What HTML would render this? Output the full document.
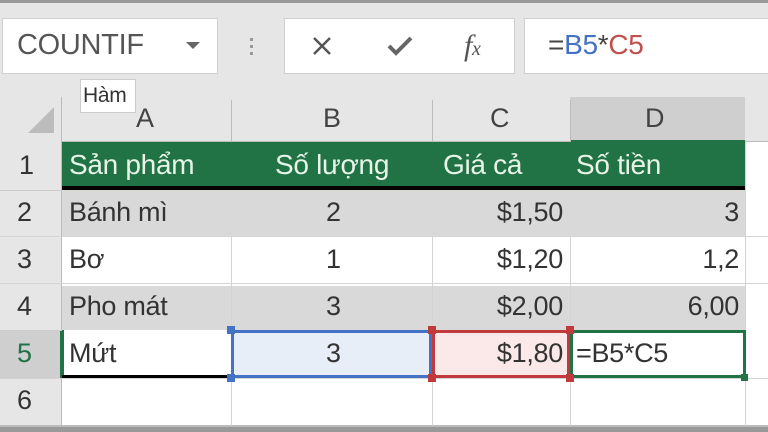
<!DOCTYPE html>
<html><head><meta charset="utf-8"><style>
*{margin:0;padding:0;box-sizing:border-box}
body{width:768px;height:432px;overflow:hidden;background:#e6e6e6;font-family:"Liberation Sans",sans-serif;position:relative;color:#333}
.a{position:absolute}
.box{background:#fff;border:1px solid #d0d0d0}
.t{position:absolute;font-size:27px;line-height:1;white-space:nowrap;letter-spacing:-0.3px}
.hl{position:absolute;background:#cfcfcf}
</style></head><body>
<div class="a" style="left:0;top:0;width:768px;height:3px;background:#999"></div>
<div class="a box" style="left:2px;top:18px;width:216px;height:56px"></div>
<div class="t" style="left:17px;top:31px;color:#555;font-size:29px">COUNTIF</div>
<div class="a" style="left:186px;top:42px;width:0;height:0;border-left:7px solid transparent;border-right:7px solid transparent;border-top:7px solid #666"></div>
<div class="a" style="left:250px;top:38px;width:3px;height:3px;background:#999;box-shadow:0 7px 0 #999,0 14px 0 #999"></div>
<div class="a box" style="left:284px;top:18px;width:231px;height:56px"></div>
<svg class="a" style="left:310px;top:34px" width="24" height="24"><path d="M4 4L20 20M20 4L4 20" stroke="#555" stroke-width="2.5"/></svg>
<svg class="a" style="left:386px;top:34px" width="28" height="24"><path d="M3 12L10 19L25 4" stroke="#666" stroke-width="4" fill="none"/></svg>
<div class="t" style="left:464px;top:31px;font-family:'Liberation Serif',serif;font-style:italic;color:#555;font-size:30px">f<span style="font-size:20px">x</span></div>
<div class="a box" style="left:524px;top:18px;width:250px;height:56px"></div>
<div class="t" style="left:548px;top:31px;color:#444;font-size:28px">=<span style="color:#4472c4">B5</span>*<span style="color:#c0504d">C5</span></div>

<div class="a" style="left:62px;top:142px;width:706px;height:290px;background:#fff"></div>
<div class="a" style="left:0;top:97px;width:62px;height:335px;background:#e6e6e6;border-right:1px solid #bbb"></div>
<svg class="a" style="left:26px;top:105px" width="30" height="30"><path d="M28 2L28 28L2 28Z" fill="#bcbcbc"/></svg>
<div class="a" style="left:62px;top:97px;width:706px;height:45px;background:#e6e6e6;border-bottom:1px solid #bbb"></div>
<div class="hl" style="left:570px;top:97px;width:175px;height:45px;border-bottom:2px solid #217346"></div>
<div class="a" style="left:231px;top:100px;width:1px;height:42px;background:#bbb"></div>
<div class="a" style="left:432px;top:100px;width:1px;height:42px;background:#bbb"></div>
<div class="a" style="left:570px;top:100px;width:1px;height:42px;background:#bbb"></div>
<div class="t" style="left:136px;top:105px;color:#444">A</div>
<div class="t" style="left:323px;top:105px;color:#444">B</div>
<div class="t" style="left:490px;top:105px;color:#444">C</div>
<div class="t" style="left:645px;top:105px;color:#444">D</div>
<div class="a" style="left:80px;top:79px;width:56px;height:34px;background:#fff;border:1px solid #ccc"></div>
<div class="t" style="left:83px;top:85px;font-size:21px;color:#333">Hàm</div>

<div class="a" style="left:62px;top:142px;width:683px;height:44px;background:#217346"></div>
<div class="a" style="left:62px;top:186px;width:683px;height:4px;background:#000"></div>
<div class="a" style="left:62px;top:190px;width:683px;height:46px;background:#d9d9d9"></div>
<div class="a" style="left:62px;top:286px;width:683px;height:44px;background:#d9d9d9"></div>
<div class="hl" style="left:0;top:330px;width:62px;height:48px;border-right:2px solid #217346"></div>
<div class="a" style="left:0;top:236px;width:768px;height:1px;background:#d4d4d4"></div>
<div class="a" style="left:0;top:283px;width:768px;height:1px;background:#d4d4d4"></div>
<div class="a" style="left:0;top:378px;width:768px;height:1px;background:#d4d4d4"></div>
<div class="a" style="left:0;top:425px;width:768px;height:2px;background:#bbb"></div>
<div class="a" style="left:0;top:427px;width:768px;height:5px;background:#999"></div>
<div class="a" style="left:231px;top:236px;width:1px;height:190px;background:#d4d4d4"></div>
<div class="a" style="left:432px;top:236px;width:1px;height:190px;background:#d4d4d4"></div>
<div class="a" style="left:570px;top:236px;width:1px;height:190px;background:#d4d4d4"></div>
<div class="a" style="left:745px;top:142px;width:1px;height:284px;background:#d4d4d4"></div>
<div class="a" style="left:0;top:190px;width:62px;height:1px;background:#ccc"></div>
<div class="a" style="left:0;top:330px;width:62px;height:1px;background:#ccc"></div>

<div class="t" style="left:19px;top:152px">1</div>
<div class="t" style="left:17px;top:199px">2</div>
<div class="t" style="left:17px;top:246px">3</div>
<div class="t" style="left:17px;top:293px">4</div>
<div class="t" style="left:17px;top:340px;color:#217346">5</div>
<div class="t" style="left:17px;top:387px">6</div>

<div class="t" style="left:69px;top:151px;color:#e8f4e8;font-size:28px">Sản phẩm</div>
<div class="t" style="left:275px;top:151px;color:#e8f4e8;font-size:28px">Số lượng</div>
<div class="t" style="left:443px;top:151px;color:#e8f4e8;font-size:28px">Giá cả</div>
<div class="t" style="left:576px;top:151px;color:#e8f4e8;font-size:28px">Số tiền</div>

<div class="t" style="left:69px;top:199px">Bánh mì</div>
<div class="t" style="left:326px;top:199px">2</div>
<div class="t" style="right:205px;top:199px">$1,50</div>
<div class="t" style="right:29px;top:199px">3</div>

<div class="t" style="left:69px;top:246px">Bơ</div>
<div class="t" style="left:326px;top:246px">1</div>
<div class="t" style="right:205px;top:246px">$1,20</div>
<div class="t" style="right:29px;top:246px">1,2</div>

<div class="t" style="left:69px;top:293px">Pho mát</div>
<div class="t" style="left:326px;top:293px">3</div>
<div class="t" style="right:205px;top:293px">$2,00</div>
<div class="t" style="right:29px;top:293px">6,00</div>

<div class="a" style="left:62px;top:330px;width:2px;height:48px;background:#217346"></div>
<div class="a" style="left:62px;top:375px;width:169px;height:3px;background:#000"></div>
<div class="a" style="left:231px;top:330px;width:201px;height:48px;background:#e8eef8;border:3px solid #4472c4"></div>
<div class="a" style="left:432px;top:330px;width:138px;height:48px;background:#fbe9e9;border:3px solid #c0393b"></div>
<div class="a" style="left:570px;top:330px;width:176px;height:48px;border:3px solid #217346"></div>
<div class="a" style="left:227px;top:326px;width:8px;height:8px;background:#4472c4"></div>
<div class="a" style="left:227px;top:374px;width:8px;height:8px;background:#4472c4"></div>
<div class="a" style="left:428px;top:326px;width:8px;height:8px;background:#c0393b"></div>
<div class="a" style="left:428px;top:374px;width:8px;height:8px;background:#c0393b"></div>
<div class="a" style="left:566px;top:326px;width:8px;height:8px;background:#c0393b"></div>
<div class="a" style="left:566px;top:374px;width:8px;height:8px;background:#c0393b"></div>
<div class="a" style="left:741px;top:374px;width:7px;height:7px;background:#217346"></div>
<div class="t" style="left:69px;top:340px">Mứt</div>
<div class="t" style="left:326px;top:340px">3</div>
<div class="t" style="right:205px;top:340px">$1,80</div>
<div class="t" style="left:576px;top:340px">=B5*C5</div>
</body></html>
